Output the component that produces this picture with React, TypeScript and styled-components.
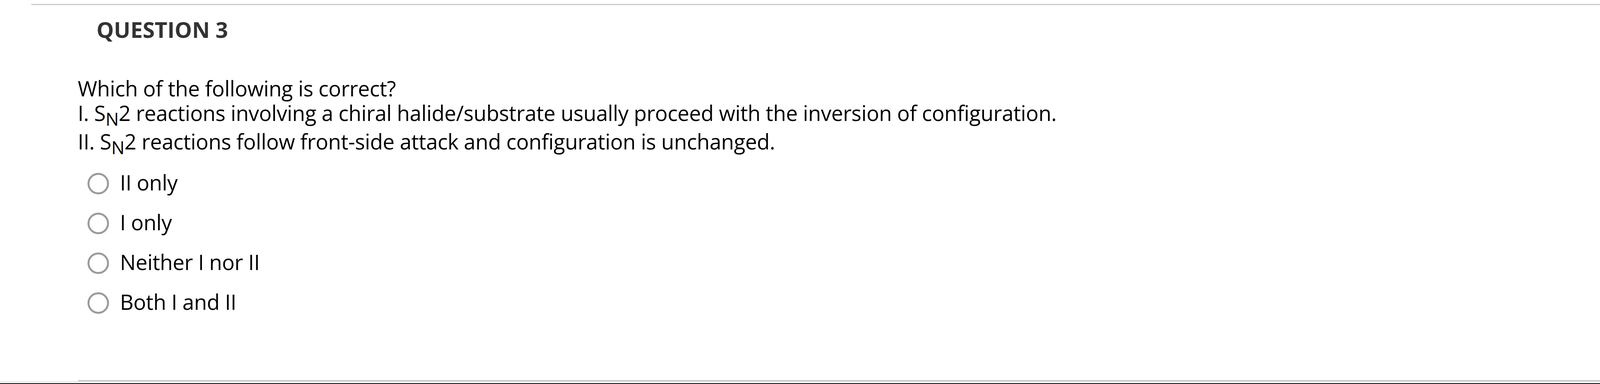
import styled, { createGlobalStyle } from 'styled-components';

const GlobalStyle = createGlobalStyle`
  html, body {
    margin: 0;
    padding: 0;
    background: #fff;
    overflow: hidden;
  }
  * {
    box-sizing: border-box;
  }
`;

const Page = styled.div`
  display: flex;
  flex-direction: column;
  width: 4832px;
  height: 984px;
  padding-top: 10px;
  overflow: hidden;
  font-family: "Open Sans", "Liberation Sans", sans-serif;
  color: #000;
`;

const QuestionCard = styled.section`
  flex: 1;
  margin-left: 80px;
  border-top: 3px solid #cdcdcd;
`;

const Header = styled.div`
  display: grid;
  grid-template-columns: 1fr 74px;
  align-items: start;
`;

const Title = styled.h2`
  margin: 0;
  padding: 34px 0 0 167px;
  font-size: 56px;
  line-height: 56px;
  font-weight: 700;
  color: #333;
`;

const PointsBox = styled.div`
  height: 161px;
  padding: 45.5px 0 0 44px;
  overflow: hidden;
  border-left: 3px solid #cdcdcd;
  border-bottom: 3px solid #cdcdcd;
  border-bottom-left-radius: 9px;
  box-shadow: inset 4px 4px 0 #f6f6f6;
  font-family: "Liberation Sans", Arial, sans-serif;
  font-size: 49px;
  line-height: 49px;
  font-weight: 700;
  color: #000;
  white-space: nowrap;
`;

const Body = styled.div`
  padding: 20.5px 0 0 119px;
`;

const Prompt = styled.p`
  margin: 0;
  font-size: 54px;
  line-height: 1.1667;
  letter-spacing: -0.4px;
  color: #000;

  sub {
    font-size: smaller;
  }
`;

const Choices = styled.ul`
  list-style: none;
  margin: 12.5px 0 0;
  padding: 0 0 0 25px;
`;

const Choice = styled.li`
  display: flex;
  align-items: center;
  height: 102px;
`;

const Radio = styled.span`
  flex-shrink: 0;
  width: 55px;
  height: 55px;
  margin: 6px 28px 0 0;
  border: 5px solid #9b9b9b;
  border-radius: 50%;
  background: #fff;
`;

const ChoiceLabel = styled.span`
  font-size: 54px;
  line-height: 63px;
  letter-spacing: -0.4px;
  color: #000;
`;

const Footer = styled.div`
  display: flex;
  height: 8px;
`;

const FooterStub = styled.div`
  width: 200px;
  margin-top: 3px;
  height: 3px;
  background: #e6e6e6;
`;

const FooterRule = styled.div`
  flex: 1;
  height: 5px;
  border-top: 3px solid #c6c6c6;
  background: #e4e4e4;
`;

const ScreenEdge = styled.div`
  height: 2px;
  background: #000;
`;

const choices = ['II only', 'I only', 'Neither I nor II', 'Both I and II'];

export default function App() {
  return (
    <>
      <GlobalStyle />
      <Page>
        <QuestionCard>
          <Header>
            <Title>QUESTION 3</Title>
            <PointsBox>1 points</PointsBox>
          </Header>
          <Body>
            <Prompt>
              Which of the following is correct?
              <br />
              I. S<sub>N</sub>2 reactions involving a chiral halide/substrate usually proceed with the inversion of configuration.
              <br />
              II. S<sub>N</sub>2 reactions follow front-side attack and configuration is unchanged.
            </Prompt>
            <Choices>
              {choices.map((label) => (
                <Choice key={label}>
                  <Radio />
                  <ChoiceLabel>{label}</ChoiceLabel>
                </Choice>
              ))}
            </Choices>
          </Body>
        </QuestionCard>
        <Footer>
          <FooterStub />
          <FooterRule />
        </Footer>
        <ScreenEdge />
      </Page>
    </>
  );
}
